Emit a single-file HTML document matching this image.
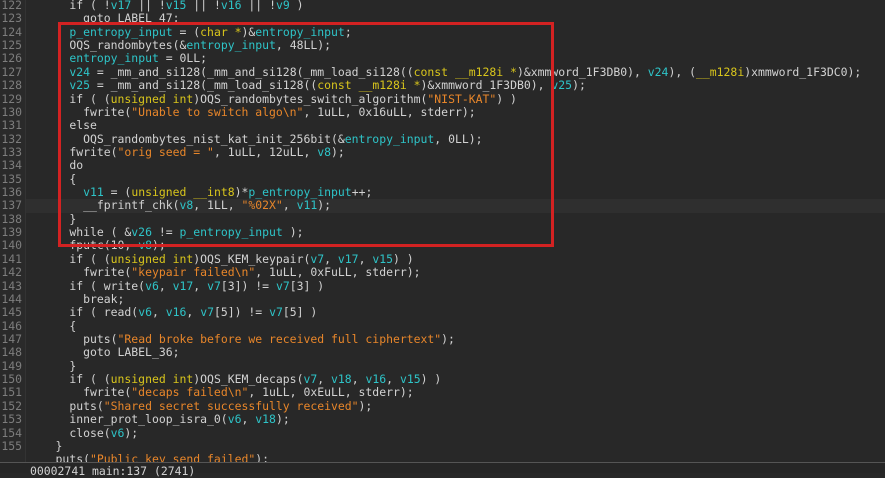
<!DOCTYPE html>
<html><head><meta charset="utf-8"><style>
html,body{margin:0;padding:0;background:#282828;width:885px;height:472px;overflow:hidden}
#g{position:absolute;left:0;top:0;width:25px;height:462px;background:#2a2a2a;border-right:1px solid #333}
pre{margin:0;font-family:"DejaVu Sans Mono","Liberation Mono",monospace;font-size:11.45px;line-height:13.36px;position:absolute;top:-1px}
#n{left:0;width:22px;text-align:right;color:#7d7d7d}
#c{left:28px;color:#d2d2d2}
.c{color:#2ec4c8}.y{color:#d8c51c}.o{color:#e8862a}
#hl{position:absolute;left:26px;top:199px;width:859px;height:14px;background:#2f2f2f}
#box{position:absolute;left:58px;top:22px;width:490px;height:219px;border:3.5px solid #d32222}
#sb{position:absolute;left:0;top:462px;width:885px;height:10px;background:#262626;border-top:1px solid #555}
#sbt{position:absolute;left:30px;top:465px;font-family:"DejaVu Sans Mono",monospace;font-size:11.45px;line-height:13px;color:#d2d2d2}
</style></head><body>
<div id="g"></div>
<div id="hl"></div>
<pre id="n">122
123
124
125
126
127
128
129
130
131
132
133
134
135
136
137
138
139
140
141
142
143
144
145
146
147
148
149
150
151
152
153
154
155</pre>
<pre id="c">      if ( !<span class="c">v17</span> || !<span class="c">v15</span> || !<span class="c">v16</span> || !<span class="c">v9</span> )
        goto LABEL_47;
      <span class="c">p_entropy_input</span> = (<span class="y">char *</span>)&amp;<span class="c">entropy_input</span>;
      OQS_randombytes(&amp;<span class="c">entropy_input</span>, 48LL);
      <span class="c">entropy_input</span> = 0LL;
      <span class="c">v24</span> = _mm_and_si128(_mm_and_si128(_mm_load_si128((<span class="y">const __m128i *</span>)&amp;xmmword_1F3DB0), <span class="c">v24</span>), (<span class="y">__m128i</span>)xmmword_1F3DC0);
      <span class="c">v25</span> = _mm_and_si128(_mm_load_si128((<span class="y">const __m128i *</span>)&amp;xmmword_1F3DB0), <span class="c">v25</span>);
      if ( (<span class="y">unsigned int</span>)OQS_randombytes_switch_algorithm(<span class="o">"NIST-KAT"</span>) )
        fwrite(<span class="o">"Unable to switch algo\n"</span>, 1uLL, 0x16uLL, stderr);
      else
        OQS_randombytes_nist_kat_init_256bit(&amp;<span class="c">entropy_input</span>, 0LL);
      fwrite(<span class="o">"orig seed = "</span>, 1uLL, 12uLL, <span class="c">v8</span>);
      do
      {
        <span class="c">v11</span> = (<span class="y">unsigned __int8</span>)*<span class="c">p_entropy_input</span>++;
        __fprintf_chk(<span class="c">v8</span>, 1LL, <span class="o">"%02X"</span>, <span class="c">v11</span>);
      }
      while ( &amp;<span class="c">v26</span> != <span class="c">p_entropy_input</span> );
      fputc(10, <span class="c">v8</span>);
      if ( (<span class="y">unsigned int</span>)OQS_KEM_keypair(<span class="c">v7</span>, <span class="c">v17</span>, <span class="c">v15</span>) )
        fwrite(<span class="o">"keypair failed\n"</span>, 1uLL, 0xFuLL, stderr);
      if ( write(<span class="c">v6</span>, <span class="c">v17</span>, <span class="c">v7</span>[3]) != <span class="c">v7</span>[3] )
        break;
      if ( read(<span class="c">v6</span>, <span class="c">v16</span>, <span class="c">v7</span>[5]) != <span class="c">v7</span>[5] )
      {
        puts(<span class="o">"Read broke before we received full ciphertext"</span>);
        goto LABEL_36;
      }
      if ( (<span class="y">unsigned int</span>)OQS_KEM_decaps(<span class="c">v7</span>, <span class="c">v18</span>, <span class="c">v16</span>, <span class="c">v15</span>) )
        fwrite(<span class="o">"decaps failed\n"</span>, 1uLL, 0xEuLL, stderr);
      puts(<span class="o">"Shared secret successfully received"</span>);
      inner_prot_loop_isra_0(<span class="c">v6</span>, <span class="c">v18</span>);
      close(<span class="c">v6</span>);
    }
    puts(<span class="o">"Public key send failed"</span>);</pre>
<div id="box"></div>
<div id="sb"></div>
<div id="sbt">00002741 main:137 (2741)</div>
</body></html>
